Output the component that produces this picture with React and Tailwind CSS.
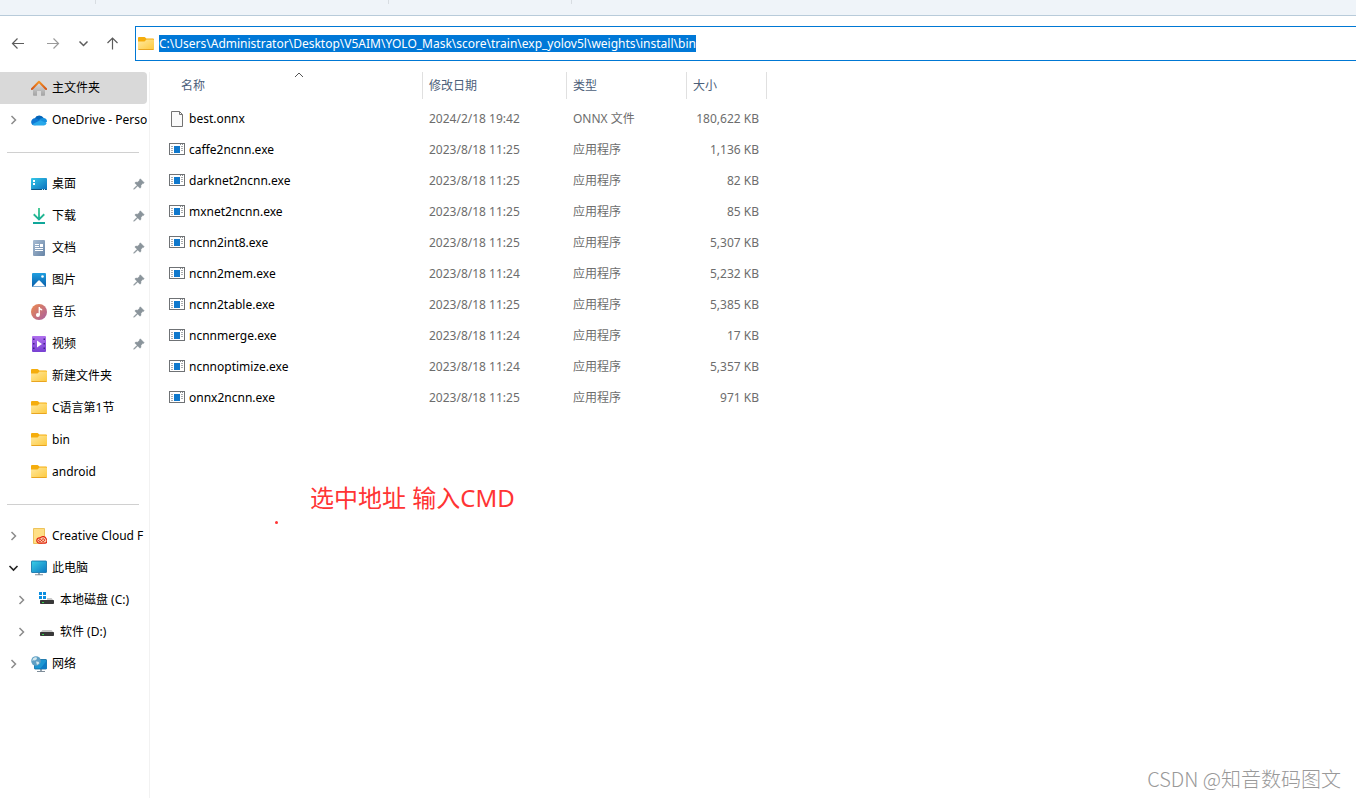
import React, { useEffect, useRef } from "react";

function Icon({ children, className = "" }) {
  return (
    <svg viewBox="0 0 16 16" aria-hidden="true" className={"size-4 shrink-0 " + className}>
      {children}
    </svg>
  );
}

function FolderIcon() {
  return (
    <Icon>
      <defs>
        <linearGradient id="folder" x1="0" y1="0" x2="1" y2="1">
          <stop offset="0" stopColor="#ffe9a0" />
          <stop offset="1" stopColor="#fdc93c" />
        </linearGradient>
      </defs>
      <path d="M0 2a1 1 0 0 1 1-1h5.500a1 1 0 0 1 .8.400L8.300 2.500H15a1 1 0 0 1 1 1V7H0z" fill="#f5ad0c" />
      <path d="M0 5.500h6.500L8.500 3.500H15.200a.8.8 0 0 1 .8.8V13a1 1 0 0 1-1 1H1a1 1 0 0 1-1-1z" fill="url(#folder)" />
      <path d="M.5 13.500h15" stroke="#e9a521" strokeWidth="1" />
    </Icon>
  );
}

function HomeIcon() {
  return (
    <Icon>
      <defs>
        <linearGradient id="home" x1="0" y1="0" x2="0" y2="1">
          <stop offset="0" stopColor="#d9d9d9" />
          <stop offset="1" stopColor="#a3a3a3" />
        </linearGradient>
        <linearGradient id="roof" x1="0" y1="0" x2="0" y2="1">
          <stop offset="0" stopColor="#f39325" />
          <stop offset="1" stopColor="#d45514" />
        </linearGradient>
      </defs>
      <path d="M2 8.500 8 3l6 5.500V15a.8.8 0 0 1-.8.8H10V11H6v4.800H2.800A.8.8 0 0 1 2 15z" fill="url(#home)" />
      <path d="M.9 9 8 1.800 15.100 9" fill="none" stroke="url(#roof)" strokeWidth="2" strokeLinecap="round" strokeLinejoin="round" />
    </Icon>
  );
}

function CloudIcon() {
  return (
    <Icon>
      <path d="M3.700 6.500a5 5 0 0 1 9-.4L10 10 2 12z" fill="#0364b8" />
      <path d="M.2 10.500A3.700 3.700 0 0 1 4 6.300c1 0 2 .3 2.800.9l6 3.800L4 13.300A3.400 3.400 0 0 1 .2 10.500z" fill="#0f78d4" />
      <path d="M8 8.300c1-1.700 2.600-2.500 4.300-2.200A3.700 3.700 0 0 1 16 9.800L13 12z" fill="#1490df" />
      <path d="M1.300 12.300 9.300 8.200l6.400 3.100A3.100 3.100 0 0 1 13 13.400H3.900a3.700 3.700 0 0 1-2.600-1.100z" fill="#28a8ea" />
    </Icon>
  );
}

function DesktopIcon() {
  return (
    <Icon>
      <defs>
        <linearGradient id="desktop" x1="0" y1="0" x2="1" y2="1">
          <stop offset="0" stopColor="#35c8e8" />
          <stop offset="1" stopColor="#0a6fbd" />
        </linearGradient>
      </defs>
      <rect x="0" y="2" width="16" height="12" rx="1" fill="url(#desktop)" />
      <path d="M.3 13.500h15.400" stroke="#0b5583" />
      <path d="M2 4h2v2H2zM2 7h2v2H2z" fill="#fff" />
      <path d="M11 13h1v1h-1zM13 13h1v1h-1z" fill="#bfe6f5" />
    </Icon>
  );
}

function DownloadIcon() {
  return (
    <Icon>
      <defs>
        <linearGradient id="download" x1="0" y1="0" x2="0" y2="1">
          <stop offset="0" stopColor="#38c78d" />
          <stop offset="1" stopColor="#0da59b" />
        </linearGradient>
      </defs>
      <path d="M7.100 0h1.800v9.300l3.700-3.700 1.300 1.300L8 12.800 2.100 6.900l1.300-1.300 3.700 3.700zM2 14h12v2H2z" fill="url(#download)" />
    </Icon>
  );
}

function DocumentIcon() {
  return (
    <Icon>
      <defs>
        <linearGradient id="document" x1="0" y1="0" x2="1" y2="1">
          <stop offset="0" stopColor="#a9bdd3" />
          <stop offset="1" stopColor="#6684a6" />
        </linearGradient>
      </defs>
      <rect x="2" y="0" width="12" height="16" rx="1" fill="url(#document)" />
      <path d="M4 4.500h4M4 6.500h4M4 8.500h8M4 10.500h8" stroke="#fff" />
      <path d="M9 4h3v3H9z" fill="#fff" />
    </Icon>
  );
}

function PictureIcon() {
  return (
    <Icon>
      <defs>
        <linearGradient id="picture" x1="0" y1="0" x2="0" y2="1">
          <stop offset="0" stopColor="#209fe0" />
          <stop offset="1" stopColor="#075ca8" />
        </linearGradient>
      </defs>
      <rect x="1" y="1" width="14" height="14" rx="1" fill="url(#picture)" />
      <path d="M1.700 14.600 7.200 8.700a1.200 1.200 0 0 1 1.700 0l5.500 5.900z" fill="#fff" />
      <circle cx="11.500" cy="4.500" r="1.300" fill="#fff" />
    </Icon>
  );
}

function MusicIcon() {
  return (
    <Icon>
      <defs>
        <linearGradient id="music" x1="0" y1="0" x2="1" y2="1">
          <stop offset="0" stopColor="#ee8a4d" />
          <stop offset="1" stopColor="#a75fa2" />
        </linearGradient>
      </defs>
      <circle cx="8" cy="8" r="8" fill="url(#music)" />
      <circle cx="6.900" cy="11" r="2" fill="#fff" />
      <path d="M7.600 3h1.300c.2 1.500 1 1.700 2.300 1.900v1.600c-1 0-1.800-.2-2.300-.7V11H7.600z" fill="#fff" />
    </Icon>
  );
}

function VideoIcon() {
  return (
    <Icon>
      <defs>
        <linearGradient id="video" x1="0" y1="0" x2="0" y2="1">
          <stop offset="0" stopColor="#b070ee" />
          <stop offset="1" stopColor="#7740d2" />
        </linearGradient>
      </defs>
      <rect x="1" y="0" width="14" height="16" rx="1" fill="url(#video)" />
      <path d="M2 2.500h1.500v1.500H2zM2 7h1.500v1.500H2zM2 11.500h1.500V13H2zM12.500 2.500H14v1.500h-1.500zM12.500 7H14v1.500h-1.500zM12.500 11.500H14V13h-1.500z" fill="#44238a" />
      <path d="M6 4.500 11 8l-5 3.500z" fill="#fff" />
    </Icon>
  );
}

function CreativeCloudIcon() {
  return (
    <Icon>
      <path d="M2.500.5h11V13L11 15.500H2.500z" fill="#ffdf85" stroke="#edc35b" />
      <path d="M9.500 15.200H8.700a2.700 2.700 0 1 1 .5-5.300 3.500 3.500 0 0 1 6 1 2.500 2.500 0 0 1-1.200 4.300H9.500z" fill="#fbd3ae" stroke="#e0210f" strokeWidth="1.200" />
      <path d="M9.700 13.500H8.800a1.100 1.100 0 1 1 .9-1.800l1.600 1.400c.6.500 1.700.5 2.100-.2.500-1-.1-2-1-2-.7 0-1.300.4-1.700 1" fill="none" stroke="#e0210f" />
    </Icon>
  );
}

function ComputerIcon() {
  return (
    <Icon>
      <defs>
        <linearGradient id="computer" x1="0" y1="0" x2="1" y2="1">
          <stop offset="0" stopColor="#3bd0e6" />
          <stop offset="1" stopColor="#0b77c2" />
        </linearGradient>
      </defs>
      <path d="M7 13h2v2H7z" fill="#97a5b0" />
      <path d="M4 14.200h8v1H4z" fill="#7f8d99" />
      <rect x=".5" y="1" width="15" height="11.500" rx=".5" fill="url(#computer)" stroke="#0e6fa7" strokeWidth=".8" />
    </Icon>
  );
}

function DriveIcon({ system }) {
  return (
    <Icon>
      <path d="M3.500 6h9L15 9H1z" fill="#c8c8c8" />
      {system && (
        <>
          <path d="M0 0h8v8H0z" fill="#fff" />
          <path d="M0 0h3v3H0zM4 0h3v3H4zM0 4h3v3H0zM4 4h3v3H4z" fill="#0a8ee0" />
        </>
      )}
      <rect x="1" y="8" width="14" height="4" rx=".8" fill="#383838" />
      <path d="M3 10h2v1H3z" fill="#35d24b" />
    </Icon>
  );
}

function NetworkIcon() {
  return (
    <Icon>
      <path d="M9 13h2v2H9z" fill="#97a5b0" />
      <path d="M6 15h8v1H6z" fill="#7f8d99" />
      <rect x="3.500" y="3.500" width="12" height="9.500" rx=".5" fill="#1b96d2" stroke="#0b69a0" strokeWidth=".8" />
      <path d="M9 13 15.500 5v8z" fill="#0d7bc4" />
      <circle cx="5" cy="5" r="4.800" fill="#5f9fc4" />
      <path d="M2 2.500c1-.9 2-1.400 3.500-1.300L6 3 4 4.500 2.500 4.300 1.200 5zM5 5.500l2.500.3.800 1.500L6 9z" fill="#d3e8ee" />
    </Icon>
  );
}

function FileIcon() {
  return (
    <Icon>
      <path d="M2.500.5h8l3 3v12h-11z" fill="#fafafa" stroke="#737373" />
      <path d="M10.500.5v3h3" fill="none" stroke="#737373" />
    </Icon>
  );
}

function ProgramIcon() {
  return (
    <Icon>
      <rect x=".5" y="1.500" width="15" height="11" fill="#fff" stroke="#6f7275" />
      <path d="M11 2.500h1M13 2.500h1" stroke="#8a8d90" />
      <path d="M2 4.500h2M2 6.500h2M2 8.500h2M2 10.500h2M12 4.500h2M12 6.500h2M12 8.500h2" stroke="#a9acaf" />
      <rect x="5" y="4" width="6" height="7" fill="#0f78cc" />
    </Icon>
  );
}

function PinIcon() {
  return (
    <svg viewBox="0 0 12 12" aria-hidden="true" className="size-3 shrink-0">
      <path d="M7.300.8 11.200 4.700l-.8.7-.5-.1L7.900 7.400l.1 1.900-1 .9-2.300-2.300L1.500 11.100l-.8.200.2-.8L4.100 7.300 1.800 5l.9-.9 2 .1L6.700 2.100 6.600 1.500z" fill="#8a949b" stroke="#8a949b" strokeWidth=".5" />
    </svg>
  );
}

function Chevron({ open }) {
  return (
    <Icon>
      {open ? (
        <path d="M4.500 6l4 4 4-4" fill="none" stroke="#222" strokeWidth="1.600" />
      ) : (
        <path d="M6.500 4l4 4-4 4" fill="none" stroke="#8b8b8b" strokeWidth="1.500" />
      )}
    </Icon>
  );
}

function NavButton({ label, children, className = "" }) {
  return (
    <button type="button" aria-label={label} className={"flex h-8 items-center justify-center " + className}>
      <svg viewBox="0 0 14 14" aria-hidden="true" className="size-3.5" fill="none" stroke="currentColor" strokeWidth="1.200">
        {children}
      </svg>
    </button>
  );
}

function NavItem({ icon, label, arrow, open, pinned, nested, active }) {
  return (
    <li
      className={
        "flex h-8 items-center overflow-hidden rounded-r-sm " +
        (nested ? "pl-[13px] " : "pl-[5px] ") +
        (active ? "bg-[#d9d9d9]" : "")
      }
    >
      {arrow ? (
        <button type="button" aria-label={label} aria-expanded={!!open} className="shrink-0">
          <Chevron open={open} />
        </button>
      ) : (
        <span className="w-4 shrink-0" />
      )}
      <a href="#" className="ml-2.5 flex min-w-0 flex-1 items-center gap-[5px] text-black">
        {icon}
        <span className="flex-1 whitespace-nowrap">{label}</span>
        {pinned && <span className="mr-0.5 flex"><PinIcon /></span>}
      </a>
    </li>
  );
}

function Divider() {
  return (
    <li className="flex h-8 items-center pr-2 pl-[7px]" role="separator">
      <span className="h-px flex-1 bg-[#d0d0d0]" />
    </li>
  );
}

const files = [
  ["best.onnx", "2024/2/18 19:42", "ONNX 文件", "180,622 KB"],
  ["caffe2ncnn.exe", "2023/8/18 11:25", "应用程序", "1,136 KB"],
  ["darknet2ncnn.exe", "2023/8/18 11:25", "应用程序", "82 KB"],
  ["mxnet2ncnn.exe", "2023/8/18 11:25", "应用程序", "85 KB"],
  ["ncnn2int8.exe", "2023/8/18 11:25", "应用程序", "5,307 KB"],
  ["ncnn2mem.exe", "2023/8/18 11:24", "应用程序", "5,232 KB"],
  ["ncnn2table.exe", "2023/8/18 11:25", "应用程序", "5,385 KB"],
  ["ncnnmerge.exe", "2023/8/18 11:24", "应用程序", "17 KB"],
  ["ncnnoptimize.exe", "2023/8/18 11:24", "应用程序", "5,357 KB"],
  ["onnx2ncnn.exe", "2023/8/18 11:25", "应用程序", "971 KB"],
];

function HeaderCell({ label, className, sorted }) {
  return (
    <th className="p-0 pb-1 text-left font-normal">
      <div className={"relative flex h-[27px] items-center border-r border-[#e0e0e0] " + className}>
        {label}
        {sorted && (
          <svg viewBox="0 0 10 6" aria-hidden="true" className="absolute top-0 left-36 h-1.5 w-2.5" fill="none" stroke="#555">
            <path d="M1 5l4-4 4 4" />
          </svg>
        )}
      </div>
    </th>
  );
}

export default function App() {
  const address = useRef(null);
  useEffect(() => {
    address.current.focus();
    address.current.select();
  }, []);

  return (
    <div className="flex min-h-screen flex-col bg-white font-['Noto_Sans','Noto_Sans_CJK_SC',sans-serif] text-xs leading-4 text-black">
      <div className="flex h-4 items-start border-b border-[#b8cbda] bg-[#eff4f9]">
        <span className="h-1 w-24 border-r border-[#d8dde2]" />
        <span className="h-1 w-[293px] border-r border-[#d8dde2]" />
        <span className="h-1 w-[183px] border-r border-[#d8dde2]" />
      </div>

      <header className="flex items-center pt-2.5 pb-[11px]">
        <nav className="flex w-[135px] shrink-0 items-center text-[#5c5c5c]">
          <NavButton label="后退" className="w-9">
            <path d="M13 6.500H1.500M6.500 1.500l-5 5 5 5" />
          </NavButton>
          <NavButton label="前进" className="w-[34px] text-[#9a9a9a]">
            <path d="M1 6.500h11.500M7.500 1.500l5 5-5 5" />
          </NavButton>
          <NavButton label="最近位置" className="w-[26px]">
            <path d="M3.500 4.500l4 4 4-4" strokeWidth="1.500" />
          </NavButton>
          <NavButton label="向上" className="w-8">
            <path d="M7.500 12.500V1M2.500 6l5-5 5 5" />
          </NavButton>
        </nav>
        <div className="flex h-[35px] flex-1 items-center gap-[5px] border border-r-0 border-[#0078d4] pl-0.5">
          <FolderIcon />
          <input
            ref={address}
            aria-label="地址"
            defaultValue="C:\Users\Administrator\Desktop\V5AIM\YOLO_Mask\score\train\exp_yolov5l\weights\install\bin"
            className="h-[17px] min-w-0 flex-1 leading-[17px] outline-none selection:bg-[#0078d7] selection:text-white"
          />
        </div>
      </header>

      <div className="flex flex-1">
        <aside className="w-[150px] shrink-0 border-r border-[#f2f2f2] pr-0.5">
          <ul>
            <NavItem icon={<HomeIcon />} label="主文件夹" active />
            <NavItem icon={<CloudIcon />} label="OneDrive - Perso" arrow />
            <Divider />
            <NavItem icon={<DesktopIcon />} label="桌面" pinned />
            <NavItem icon={<DownloadIcon />} label="下载" pinned />
            <NavItem icon={<DocumentIcon />} label="文档" pinned />
            <NavItem icon={<PictureIcon />} label="图片" pinned />
            <NavItem icon={<MusicIcon />} label="音乐" pinned />
            <NavItem icon={<VideoIcon />} label="视频" pinned />
            <NavItem icon={<FolderIcon />} label="新建文件夹" />
            <NavItem icon={<FolderIcon />} label="C语言第1节" />
            <NavItem icon={<FolderIcon />} label="bin" />
            <NavItem icon={<FolderIcon />} label="android" />
            <Divider />
            <NavItem icon={<CreativeCloudIcon />} label="Creative Cloud F" arrow />
            <NavItem icon={<ComputerIcon />} label="此电脑" arrow open />
            <NavItem icon={<DriveIcon system />} label="本地磁盘 (C:)" arrow nested />
            <NavItem icon={<DriveIcon />} label="软件 (D:)" arrow nested />
            <NavItem icon={<NetworkIcon />} label="网络" arrow />
          </ul>
        </aside>

        <main className="flex flex-1 flex-col">
          <table className="w-[617px] table-fixed border-collapse">
            <colgroup>
              <col className="w-[273px]" />
              <col className="w-36" />
              <col className="w-[120px]" />
              <col className="w-20" />
            </colgroup>
            <thead className="text-[#4c607a]">
              <tr>
                <HeaderCell label="名称" className="pl-[31px]" sorted />
                <HeaderCell label="修改日期" className="pl-1.5" />
                <HeaderCell label="类型" className="pl-1.5" />
                <HeaderCell label="大小" className="pl-1.5" />
              </tr>
            </thead>
            <tbody className="text-[#6d6d6d]">
              {files.map(([name, date, type, size], i) => (
                <tr key={name} className="h-[31px]">
                  <td className="p-0 pt-px pl-[19px] text-black">
                    <div className="flex items-center gap-1">
                      {i === 0 ? <FileIcon /> : <ProgramIcon />}
                      {name}
                    </div>
                  </td>
                  <td className="p-0 pt-px pl-1.5">{date}</td>
                  <td className="p-0 pt-px pl-1.5">{type}</td>
                  <td className="p-0 pt-px pr-2 text-right">{size}</td>
                </tr>
              ))}
            </tbody>
          </table>

          <p className="mt-[69px] ml-40 text-2xl leading-8 text-[#ff3434]">选中地址 输入CMD</p>
          <span className="mt-[7px] ml-[125px] size-[3px] rounded-full bg-[#ff3434]" />

          <p className="mt-auto self-end pr-[15px] pb-[7px] font-['Noto_Sans_CJK_SC',sans-serif] text-xl leading-6 font-light text-[#999999]">
            CSDN @知音数码图文
          </p>
        </main>
      </div>
    </div>
  );
}
